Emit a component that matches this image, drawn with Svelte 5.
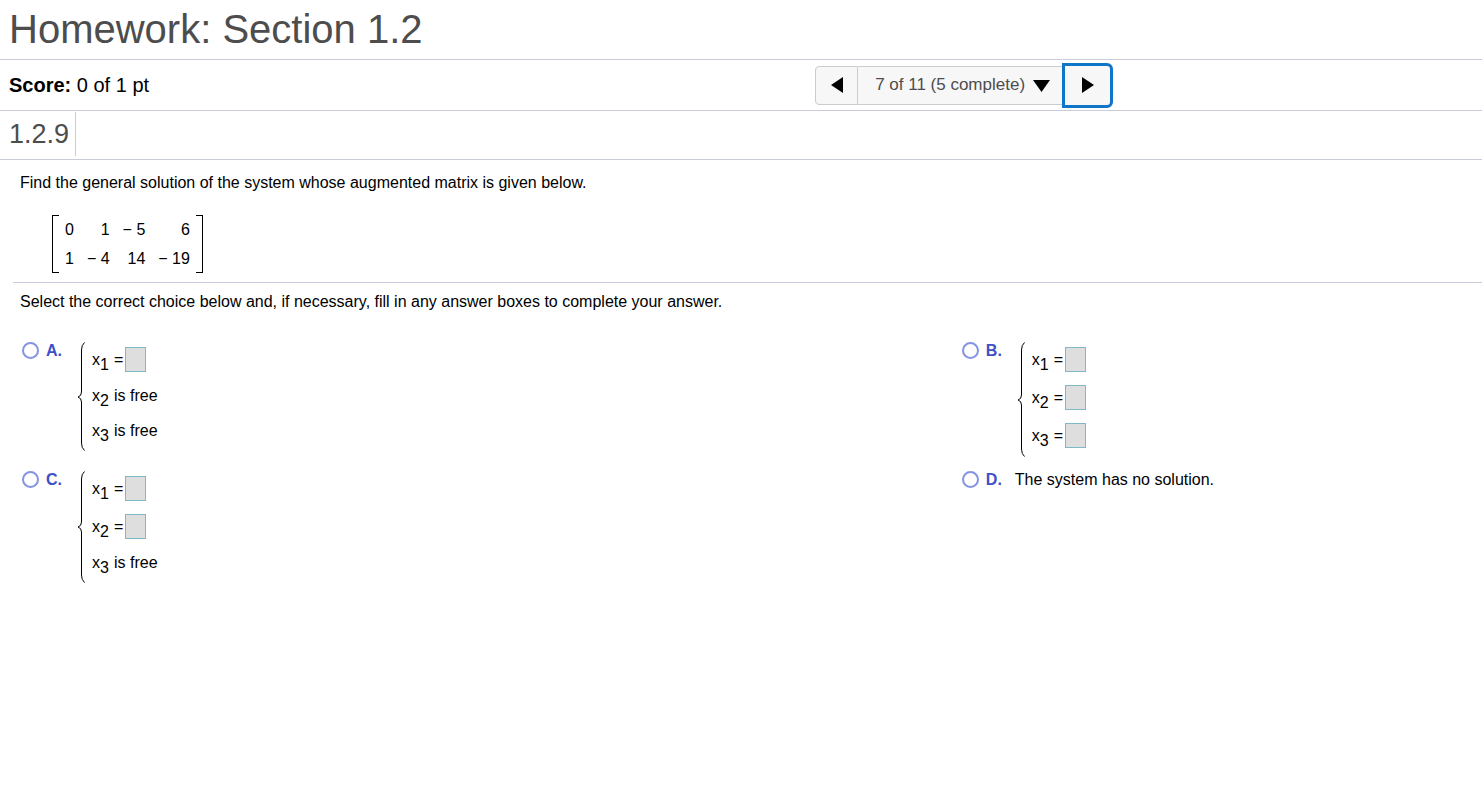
<script>
  let selected = '';

  const matrix = [
    ['0', '1', '− 5', '6'],
    ['1', '− 4', '14', '− 19']
  ];

  // each entry in rows says whether that variable is free or gets an answer box
  const choices = [
    { letter: 'A', rows: ['box', 'free', 'free'] },
    { letter: 'B', rows: ['box', 'box', 'box'] },
    { letter: 'C', rows: ['box', 'box', 'free'] },
    { letter: 'D', text: 'The system has no solution.' }
  ];
</script>

<div class="page">
  <header class="title">
    <h1>Homework: Section 1.2</h1>
  </header>

  <div class="toolbar">
    <div class="score"><b>Score:</b> 0 of 1 pt</div>
    <nav>
      <button class="prev" type="button" aria-label="Previous question">
        <svg width="12" height="16" viewBox="0 0 12 16"><path d="M12 0V16L0 8z" /></svg>
      </button>
      <button class="current" type="button">
        <span>7 of 11 (5 complete)</span>
        <svg width="17" height="14" viewBox="0 0 17 14"><path d="M0 2H17L8.500 14z" /></svg>
      </button>
      <button class="next" type="button" aria-label="Next question">
        <svg width="12" height="16" viewBox="0 0 12 16"><path d="M0 0V16L12 8z" /></svg>
      </button>
    </nav>
  </div>

  <div class="question-bar">
    <h2>1.2.9</h2>
  </div>

  <main>
    <p>Find the general solution of the system whose augmented matrix is given below.</p>

    <div class="matrix">
      <table>
        <tbody>
          {#each matrix as row}
            <tr>
              {#each row as cell}
                <td>{cell}</td>
              {/each}
            </tr>
          {/each}
        </tbody>
      </table>
    </div>

    <hr />

    <p>Select the correct choice below and, if necessary, fill in any answer boxes to complete your answer.</p>

    <div class="choices">
      {#each choices as choice}
        <div class="choice">
          <input type="radio" id="choice-{choice.letter}" name="choice" value={choice.letter} bind:group={selected} />
          <label class="letter" for="choice-{choice.letter}">{choice.letter}.</label>
          {#if choice.rows}
            <div class="system">
              <div class="brace">
                <svg width="8" height="8" viewBox="0 0 8 8"><path d="M7.500 0.500Q4.500 3 4.500 8" /></svg>
                <i></i>
                <svg width="8" height="10" viewBox="0 0 8 10"><path d="M4.500 0Q4.500 4 1 5Q4.500 6 4.500 10" /></svg>
                <i></i>
                <svg width="8" height="8" viewBox="0 0 8 8"><path d="M7.500 7.500Q4.500 5 4.500 0" /></svg>
              </div>
              <div class="rows">
                {#each choice.rows as kind, i}
                  {#if kind === 'box'}
                    <div class="row">
                      <span class="var">x<sub>{i + 1}</sub></span>
                      <span class="equals">=</span>
                      <input type="text" readonly aria-label="{choice.letter}, x{i + 1}" />
                    </div>
                  {:else}
                    <div class="row">
                      <span class="var">x<sub>{i + 1}</sub></span>
                      <span>is free</span>
                    </div>
                  {/if}
                {/each}
              </div>
            </div>
          {:else}
            <span class="statement">{choice.text}</span>
          {/if}
        </div>
      {/each}
    </div>
  </main>
</div>

<style>
  :global(body) {
    margin: 0;
    background: #fff;
  }
  .page {
    font-family: "Liberation Sans", Arial, sans-serif;
    font-size: 16px;
    line-height: 20px;
    color: #000;
  }
  h1, h2, p {
    margin: 0;
    font-weight: normal;
  }
  .title {
    padding: 0 9px;
    border-bottom: 1px solid #c9cddb;
  }
  h1 {
    font-size: 40px;
    line-height: 59px;
    color: #4d4d4d;
  }
  .toolbar {
    display: grid;
    grid-template-columns: 55% 1fr;
    align-items: center;
    height: 50px;
    border-bottom: 1px solid #c9cddb;
  }
  .score {
    padding-left: 9px;
    font-size: 20px;
  }
  nav {
    display: flex;
    align-items: center;
  }
  button {
    display: flex;
    align-items: center;
    justify-content: center;
    box-sizing: border-box;
    height: 39px;
    padding: 0;
    border: 1px solid #ccc;
    background: #f7f7f7;
    font-family: inherit;
    font-size: 17px;
    color: #4d4d4d;
    cursor: pointer;
  }
  button path {
    fill: #000;
  }
  .prev {
    width: 43px;
    border-radius: 4px 0 0 4px;
  }
  .current {
    gap: 8px;
    width: 204px;
    padding-left: 5px;
    border-left: none;
    border-right: none;
  }
  .next {
    width: 51px;
    height: 45px;
    border: 3px solid #0f75c9;
    border-radius: 0 6px 6px 0;
  }
  .question-bar {
    display: flex;
    padding: 1px 0 3px;
    border-bottom: 1px solid #c9cddb;
  }
  h2 {
    padding: 0 6px 0 9px;
    border-right: 1px solid #c9cddb;
    font-size: 27px;
    line-height: 44px;
    color: #4d4d4d;
  }
  main {
    padding: 13px 0 0 20px;
  }
  .matrix {
    width: fit-content;
    margin: 22px 0 0 32px;
    padding: 0 6px;
    /* square brackets: two vertical bars with short ticks at the ends */
    border: solid #000;
    border-width: 0 1px;
    background:
      linear-gradient(#000, #000) left top / 6px 1px,
      linear-gradient(#000, #000) left bottom / 6px 1px,
      linear-gradient(#000, #000) right top / 6px 1px,
      linear-gradient(#000, #000) right bottom / 6px 1px;
    background-repeat: no-repeat;
  }
  table {
    border-collapse: collapse;
  }
  td {
    height: 29px;
    padding: 0 6px;
    text-align: right;
    white-space: nowrap;
  }
  td + td {
    padding-left: 7px;
  }
  hr {
    height: 1px;
    margin: 9px 0 9px -7px;
    border: none;
    background: #c9cddb;
  }
  .choices {
    display: grid;
    grid-template-columns: 9fr 5fr;
    row-gap: 14px;
    margin-top: 30px;
  }
  .choice {
    display: flex;
    align-items: flex-start;
  }
  input[type='radio'] {
    appearance: none;
    box-sizing: border-box;
    width: 17px;
    height: 17px;
    margin: 0 7px 0 2px;
    border: 2px solid #8494e2;
    border-radius: 50%;
    background: #fff;
  }
  input[type='radio']:checked {
    background: #3d50c8;
    box-shadow: inset 0 0 0 3px #fff;
  }
  .letter {
    width: 31px;
    line-height: 17px;
    font-weight: bold;
    color: #3d50c8;
  }
  .statement {
    margin-left: -2px;
    line-height: 17px;
  }
  .system {
    display: flex;
  }
  .brace {
    display: flex;
    flex-direction: column;
    width: 8px;
  }
  .brace i {
    flex: 1;
    width: 1px;
    margin-left: 4px;
    background: #000;
  }
  .brace path {
    fill: none;
    stroke: #000;
  }
  .rows {
    display: flex;
    flex-direction: column;
    gap: 13px;
    padding: 5px 0 9px 7px;
  }
  .row {
    display: flex;
    align-items: center;
    min-height: 22px;
  }
  .var {
    width: 22px;
  }
  sub {
    font-size: 16px;
    line-height: 0;
    vertical-align: -5px;
  }
  .equals {
    width: 11px;
  }
  .row input {
    box-sizing: border-box;
    width: 21px;
    height: 25px;
    padding: 0;
    border: 1px solid #7fb8c8;
    background: #dedede;
  }
</style>
